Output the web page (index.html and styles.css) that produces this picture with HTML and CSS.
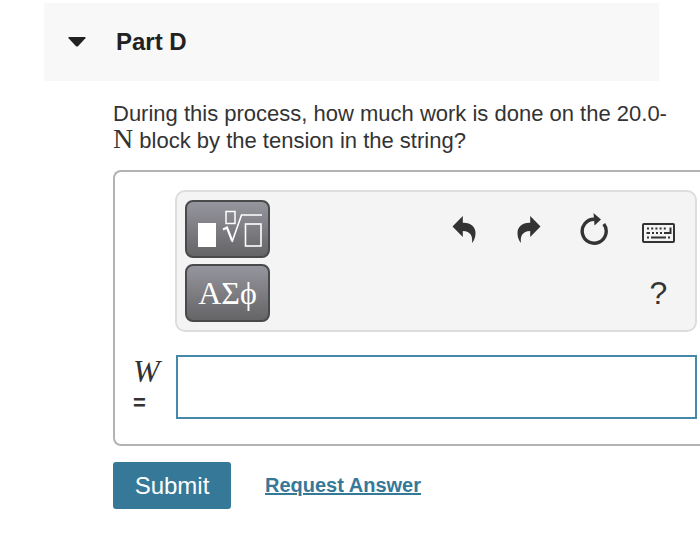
FILE: index.html
```html
<!DOCTYPE html>
<html lang="en">
<head>
    <meta charset="UTF-8">
    <meta name="viewport" content="width=device-width, initial-scale=1.0">
    <title>Part D</title>
    <link rel="stylesheet" href="styles.css">
</head>
<body>
    <h2 class="part-header">
        <button type="button" class="part-toggle" aria-expanded="true">
            <svg class="arrow" width="18" height="10" viewBox="0 0 18 10" aria-hidden="true"><path d="M1 0h16q1 .5.4 1.3L10 9.2q-1 .8-2 0L.6 1.3Q0 .5 1 0z" fill="#222"/></svg>
            Part D
        </button>
    </h2>

    <form class="part-body" id="answerForm">
        <p class="question">During this process, how much work is done on the 20.0-<wbr><span class="unit">N</span> block by the tension in the string?</p>

        <div class="answer-box">
            <div class="toolbar">
                <button type="button" class="palette" aria-label="Templates">
                    <svg width="69" height="38" viewBox="-2 0 69 38" fill="none" stroke="#fff" aria-hidden="true">
                        <rect x="3" y="13" width="18" height="24" fill="#fff" stroke="none"/>
                        <rect x="31" y="1.500" width="9" height="12" stroke-width="1.500"/>
                        <path d="M28 19.500l4-2 5 13" stroke-width="2.200"/>
                        <path d="M37 32l9.500-27H67" stroke-width="1.600"/>
                        <rect x="50.500" y="14" width="15.500" height="22" stroke-width="1.600"/>
                    </svg>
                </button>
                <button type="button" class="palette" aria-label="Greek letters">ΑΣϕ</button>

                <button type="button" class="tool undo" aria-label="Undo">
                    <svg width="24" height="27" viewBox="0 0 24 27" aria-hidden="true"><path d="M0.500 10.500L10.800 0v6.800C19 6.500 23.500 11 23.500 17c0 4-1.200 7.500-3.500 10 .9-7-1.200-11.500-9.200-12v6z" fill="#333"/></svg>
                </button>
                <button type="button" class="tool redo" aria-label="Redo">
                    <svg width="24" height="27" viewBox="0 0 24 27" aria-hidden="true"><path d="M23.500 10.500L13.200 0v6.800C5 6.500.5 11 .5 17c0 4 1.200 7.500 3.500 10-.9-7 1.200-11.500 9.200-12v6z" fill="#333"/></svg>
                </button>
                <button type="button" class="tool reset" aria-label="Reset">
                    <svg width="28" height="32" viewBox="0 0 28 32" aria-hidden="true"><path d="M14 6.200A12 12 0 1 0 23.800 11" fill="none" stroke="#333" stroke-width="3.400"/><path d="M13.500 0l7.500 6.500-6.500 6z" fill="#333"/></svg>
                </button>
                <button type="button" class="tool keyboard" aria-label="Keyboard shortcuts">
                    <svg width="33" height="28" viewBox="0 0 33 28" aria-hidden="true">
                        <rect x="1" y="9" width="31" height="18" rx="1" fill="none" stroke="#333" stroke-width="2"/>
                        <path d="M5 13.500h20" stroke="#333" stroke-width="2" stroke-dasharray="2 2.200"/>
                        <path d="M4.500 18h3.500m2 0h2m2 0h2m2 0h2m2 0h6.500v-5.500" fill="none" stroke="#333" stroke-width="2"/>
                        <path d="M5 22.500h2m2 0h15m2 0h2" stroke="#333" stroke-width="2"/>
                    </svg>
                </button>
                <button type="button" class="tool help" aria-label="Help">?</button>
            </div>

            <div class="answer-row">
                <label for="work"><i>W</i><span>=</span></label>
                <input type="text" id="work" name="work">
            </div>
        </div>

        <div class="actions">
            <button type="submit" class="submit">Submit</button>
            <a href="#" class="request">Request Answer</a>
        </div>
    </form>
</body>
</html>
```
FILE: styles.css
```css
* {
    box-sizing: border-box;
}
body {
    font-family: "Liberation Sans", Arial, sans-serif;
    font-size: 22px;
    color: #333;
    background-color: #fff;
    margin: 0;
    padding-top: 3px;
    overflow-x: hidden;
}
button, input {
    font-family: inherit;
    font-size: inherit;
    color: inherit;
}
button {
    border: none;
    background: none;
    padding: 0;
    cursor: pointer;
}
.part-header {
    margin: 0 41px 0 44px;
    background-color: #f8f8f8;
    font-size: 24px;
}
.part-toggle {
    display: flex;
    align-items: center;
    gap: 30px;
    width: 100%;
    height: 78px;
    padding-left: 24px;
    font-weight: bold;
    color: #222;
}
.part-body {
    padding: 19px 0 0 113px;
}
.question {
    margin: 0 30px 16px 0;
    line-height: 27px;
}
.unit {
    font-family: "Liberation Serif", "Times New Roman", serif;
    font-size: 28px;
    line-height: 20px;
}
.answer-box {
    border: 2px solid #b3b3b3;
    border-right: none;
    border-radius: 8px 0 0 8px;
    padding: 18px 3px 25px 18px;
}
.toolbar {
    display: grid;
    grid-template-columns: 85px 1fr repeat(4, 65px);
    grid-template-rows: 58px 58px;
    row-gap: 6px;
    margin-left: 42px;
    padding: 8px 4px 8px 8px;
    border: 2px solid #ddd;
    border-radius: 10px;
    background-color: #f4f4f4;
}
.palette {
    grid-column: 1;
    display: flex;
    align-items: center;
    justify-content: center;
    border: 2px solid #4a4a4c;
    border-radius: 8px;
    background: linear-gradient(#95959d, #656567);
    color: #fff;
    font-family: "Liberation Serif", "Times New Roman", serif;
    font-size: 32px;
}
.tool {
    display: flex;
    align-items: center;
    justify-content: center;
}
.undo {
    grid-area: 1 / 3;
}
.redo {
    grid-area: 1 / 4;
}
.reset {
    grid-area: 1 / 5;
}
.keyboard {
    grid-area: 1 / 6;
}
.help {
    grid-area: 2 / 6;
    font-size: 32px;
}
.answer-row {
    display: flex;
    margin-top: 23px;
}
.answer-row label {
    display: flex;
    flex-direction: column;
    width: 43px;
    line-height: 32px;
}
.answer-row i {
    font-family: "Liberation Serif", "Times New Roman", serif;
    font-size: 32px;
}
.answer-row span {
    font-weight: bold;
}
.answer-row input {
    flex: 1;
    min-width: 0;
    height: 64px;
    padding: 0 10px;
    border: 2px solid #4788a8;
    background-color: #fff;
}
.actions {
    display: flex;
    align-items: center;
    gap: 34px;
    margin-top: 16px;
}
.submit {
    width: 118px;
    height: 47px;
    border-radius: 3px;
    background-color: #367898;
    color: #fff;
    font-size: 24px;
}
.request {
    font-size: 20px;
    font-weight: bold;
    color: #367898;
}
```
